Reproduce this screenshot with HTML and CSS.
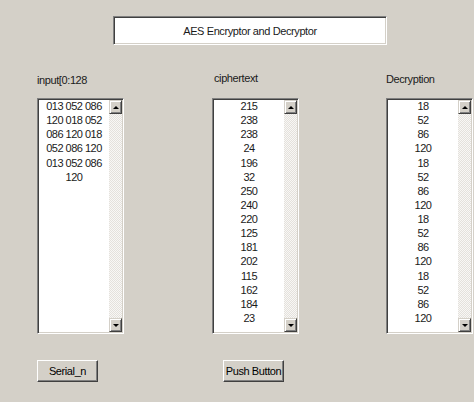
FILE: index.html
```html
<!DOCTYPE html>
<html>
<head>
<meta charset="utf-8">
<link rel="stylesheet" href="styles.css">
</head>
<body>
<div class="window">
  <div class="title-row">
    <div class="title-box">AES Encryptor and Decryptor</div>
  </div>
  <div class="columns">
    <div class="col">
      <div class="label">input[0:128</div>
      <div class="listbox">
        <ul class="items">
          <li>013 052 086</li>
          <li>120 018 052</li>
          <li>086 120 018</li>
          <li>052 086 120</li>
          <li>013 052 086</li>
          <li>120</li>
        </ul>
        <div class="scrollbar">
          <div class="arrow up"><span class="tri-up"></span></div>
          <div class="track"></div>
          <div class="arrow down"><span class="tri-down"></span></div>
        </div>
      </div>
    </div>
    <div class="col">
      <div class="label">ciphertext</div>
      <div class="listbox">
        <ul class="items">
          <li>215</li><li>238</li><li>238</li><li>24</li>
          <li>196</li><li>32</li><li>250</li><li>240</li>
          <li>220</li><li>125</li><li>181</li><li>202</li>
          <li>115</li><li>162</li><li>184</li><li>23</li>
        </ul>
        <div class="scrollbar">
          <div class="arrow up"><span class="tri-up"></span></div>
          <div class="track"></div>
          <div class="arrow down"><span class="tri-down"></span></div>
        </div>
      </div>
    </div>
    <div class="col">
      <div class="label">Decryption</div>
      <div class="listbox">
        <ul class="items">
          <li>18</li><li>52</li><li>86</li><li>120</li>
          <li>18</li><li>52</li><li>86</li><li>120</li>
          <li>18</li><li>52</li><li>86</li><li>120</li>
          <li>18</li><li>52</li><li>86</li><li>120</li>
        </ul>
        <div class="scrollbar">
          <div class="arrow up"><span class="tri-up"></span></div>
          <div class="track"></div>
          <div class="arrow down"><span class="tri-down"></span></div>
        </div>
      </div>
    </div>
  </div>
  <div class="buttons">
    <button class="btn">Serial_n</button>
    <button class="btn push">Push Button</button>
  </div>
</div>
</body>
</html>
```
FILE: styles.css
```css
html, body {
  margin: 0;
  padding: 0;
}
body {
  background: #d4d0c8;
  font-family: "Liberation Sans", Arial, sans-serif;
  font-size: 11px;
  color: #1a1a1a;
  width: 474px;
  height: 402px;
  overflow: hidden;
}
.window {
  display: flex;
  flex-direction: column;
}
.title-row {
  padding: 16px 0 0 113px;
}
.title-box {
  box-sizing: border-box;
  width: 274px;
  height: 29px;
  background: #fff;
  border: 1px solid;
  border-color: #808080 #fff #fff #808080;
  box-shadow: inset 1px 1px 0 #404040, inset -1px -1px 0 #d4d0c8;
  display: flex;
  align-items: center;
  justify-content: center;
  letter-spacing: -0.4px;
}
.columns {
  display: flex;
  gap: 87px;
  padding: 28px 0 0 37px;
}
.col {
  display: flex;
  flex-direction: column;
  width: 87px;
}
.col:first-child {
  margin-right: 1px;
}
.label {
  height: 14px;
  line-height: 14px;
  letter-spacing: -0.4px;
  margin-bottom: 11px;
}
.col:nth-child(2) .label { padding-left: 2px; margin-top: -2px; margin-bottom: 13px; }
.col:nth-child(3) .label { margin-top: -1px; margin-bottom: 12px; }
.listbox {
  box-sizing: border-box;
  width: 87px;
  height: 236px;
  background: #fff;
  border: 1px solid;
  border-color: #808080 #fff #fff #808080;
  box-shadow: inset 1px 1px 0 #404040, inset -1px -1px 0 #d4d0c8;
  padding: 1px;
  display: flex;
  overflow: hidden;
}
.items {
  list-style: none;
  margin: -1px 0 0 0;
  padding: 0;
  flex: 1;
  text-align: center;
  line-height: 14.13px;
  letter-spacing: -0.5px;
  overflow: hidden;
}
.scrollbar {
  width: 13px;
  display: flex;
  flex-direction: column;
}
.track {
  flex: 1;
  background-color: #f1efec;
  background-image: repeating-conic-gradient(#e4e1dc 0 25%, #f8f7f5 0 50%);
  background-size: 2px 2px;
}
.arrow {
  box-sizing: border-box;
  width: 13px;
  height: 14px;
  background: #d4d0c8;
  border: 1px solid;
  border-color: #d4d0c8 #404040 #404040 #d4d0c8;
  box-shadow: inset 1px 1px 0 #fff, inset -1px -1px 0 #808080;
  display: flex;
  align-items: center;
  justify-content: center;
}
.tri-up {
  width: 0;
  height: 0;
  border-left: 3px solid transparent;
  border-right: 3px solid transparent;
  border-bottom: 3px solid #000;
}
.tri-down {
  width: 0;
  height: 0;
  border-left: 3px solid transparent;
  border-right: 3px solid transparent;
  border-top: 3px solid #000;
}
.buttons {
  display: flex;
  gap: 125px;
  padding: 26px 0 0 37px;
}
.btn {
  box-sizing: border-box;
  width: 61px;
  height: 22px;
  padding: 0;
  font-family: "Liberation Sans", Arial, sans-serif;
  font-size: 11px;
  letter-spacing: -0.4px;
  color: #000;
  background: #d4d0c8;
  border: 1px solid;
  border-color: #fff #404040 #404040 #fff;
  box-shadow: inset -1px -1px 0 #808080;
}
```
